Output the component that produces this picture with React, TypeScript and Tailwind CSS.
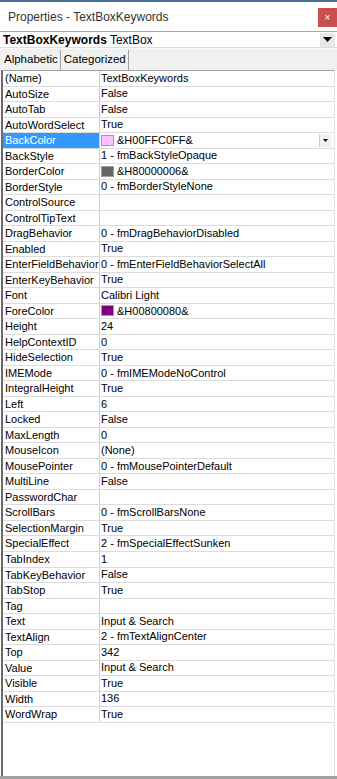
import React from 'react';

interface Prop {
  name: string;
  value: string;
  swatch?: string;
}

const props: Prop[] = [
  { name: '(Name)', value: 'TextBoxKeywords' },
  { name: 'AutoSize', value: 'False' },
  { name: 'AutoTab', value: 'False' },
  { name: 'AutoWordSelect', value: 'True' },
  { name: 'BackColor', value: '&H00FFC0FF&', swatch: '#ffc0ff' },
  { name: 'BackStyle', value: '1 - fmBackStyleOpaque' },
  { name: 'BorderColor', value: '&H80000006&', swatch: '#646464' },
  { name: 'BorderStyle', value: '0 - fmBorderStyleNone' },
  { name: 'ControlSource', value: '' },
  { name: 'ControlTipText', value: '' },
  { name: 'DragBehavior', value: '0 - fmDragBehaviorDisabled' },
  { name: 'Enabled', value: 'True' },
  { name: 'EnterFieldBehavior', value: '0 - fmEnterFieldBehaviorSelectAll' },
  { name: 'EnterKeyBehavior', value: 'True' },
  { name: 'Font', value: 'Calibri Light' },
  { name: 'ForeColor', value: '&H00800080&', swatch: '#800080' },
  { name: 'Height', value: '24' },
  { name: 'HelpContextID', value: '0' },
  { name: 'HideSelection', value: 'True' },
  { name: 'IMEMode', value: '0 - fmIMEModeNoControl' },
  { name: 'IntegralHeight', value: 'True' },
  { name: 'Left', value: '6' },
  { name: 'Locked', value: 'False' },
  { name: 'MaxLength', value: '0' },
  { name: 'MouseIcon', value: '(None)' },
  { name: 'MousePointer', value: '0 - fmMousePointerDefault' },
  { name: 'MultiLine', value: 'False' },
  { name: 'PasswordChar', value: '' },
  { name: 'ScrollBars', value: '0 - fmScrollBarsNone' },
  { name: 'SelectionMargin', value: 'True' },
  { name: 'SpecialEffect', value: '2 - fmSpecialEffectSunken' },
  { name: 'TabIndex', value: '1' },
  { name: 'TabKeyBehavior', value: 'False' },
  { name: 'TabStop', value: 'True' },
  { name: 'Tag', value: '' },
  { name: 'Text', value: 'Input & Search' },
  { name: 'TextAlign', value: '2 - fmTextAlignCenter' },
  { name: 'Top', value: '342' },
  { name: 'Value', value: 'Input & Search' },
  { name: 'Visible', value: 'True' },
  { name: 'Width', value: '136' },
  { name: 'WordWrap', value: 'True' },
];

const SELECTED = 'BackColor';

function DownArrow({ small }: { small?: boolean }) {
  return small ? (
    <svg width="5" height="3" viewBox="0 0 5 3">
      <path d="M0 0h5L2.5 3z" fill="#000" />
    </svg>
  ) : (
    <svg width="9" height="5" viewBox="0 0 9 5">
      <path d="M0 0h9L4.5 5z" fill="#000" />
    </svg>
  );
}

function Row({ p }: { p: Prop }) {
  const sel = p.name === SELECTED;
  return (
    <div className="flex h-[15.53px] border-b border-[#dcdcdc] leading-[15px]">
      <div
        className={`w-[97px] shrink-0 pl-[2px] border-r border-[#d0d0d0] whitespace-nowrap overflow-hidden ${
          sel ? 'bg-[#3399ff] text-white' : 'text-black'
        }`}
      >
        {p.name}
      </div>
      <div className="flex flex-1 items-center min-w-0 pl-[1px] whitespace-nowrap overflow-hidden">
        {p.swatch && (
          <span
            className="w-[13px] h-[11px] shrink-0 mr-[3px] border border-[#a0a0a0]"
            style={{ backgroundColor: p.swatch }}
          />
        )}
        <span className="flex-1">{p.value}</span>
        {sel && (
          <span className="w-[12px] h-[13px] mr-[3px] flex items-center justify-center bg-[#f0f0f0] border-l border-[#d0d0d0]">
            <DownArrow small />
          </span>
        )}
      </div>
    </div>
  );
}

export default function App() {
  return (
    <div
      className="w-[337px] h-[779px] bg-white flex flex-col overflow-hidden text-[11px] text-black"
      style={{ fontFamily: '"Liberation Sans", Arial, sans-serif' }}
    >
      {/* window frame top */}
      <div className="h-[2px] bg-[#4a7099]" />

      {/* title bar */}
      <div className="h-[29px] flex items-start justify-between">
        <span className="pl-[8px] pt-[6px] text-[12px] text-[#333333]">
          Properties - TextBoxKeywords
        </span>
        <div className="mt-[6px] w-[19px] h-[19px] bg-[#c9504f] flex items-center justify-center text-white text-[10px] leading-none">
          ×
        </div>
      </div>

      {/* object selector */}
      <div className="h-[17px] flex items-center border-t border-[#a8a8a8] border-b border-b-[#dcdcdc]">
        <span className="pl-[3px] flex-1 text-[12px] whitespace-nowrap">
          <b>TextBoxKeywords</b> TextBox
        </span>
        <span className="w-[15px] h-[14px] mr-[2px] flex items-center justify-center bg-[#e8e8e8]">
          <DownArrow />
        </span>
      </div>

      {/* tabs */}
      <div className="h-[22px] flex items-end bg-[#f0f0f0] border-t border-[#f8f8f8]">
        <div className="h-[20px] flex items-center pl-[4px] pr-[2px] border-r border-[#a0a0a0] text-[11.5px]">
          Alphabetic
        </div>
        <div className="h-[20px] flex items-center pl-[3px] pr-[2px] border-r border-[#a0a0a0] text-[11.5px]">
          Categorized
        </div>
      </div>

      {/* property grid */}
      <div className="flex-1 flex flex-col border-l-2 border-[#6b6b6b] border-r border-r-[#e4e4e4] border-t border-t-[#a0a0a0] ml-[1px] mr-[2px]">
        {props.map((p) => (
          <Row key={p.name} p={p} />
        ))}
      </div>

      {/* bottom edge */}
      <div className="h-[3px] bg-[#a0a0a0]" />
    </div>
  );
}
